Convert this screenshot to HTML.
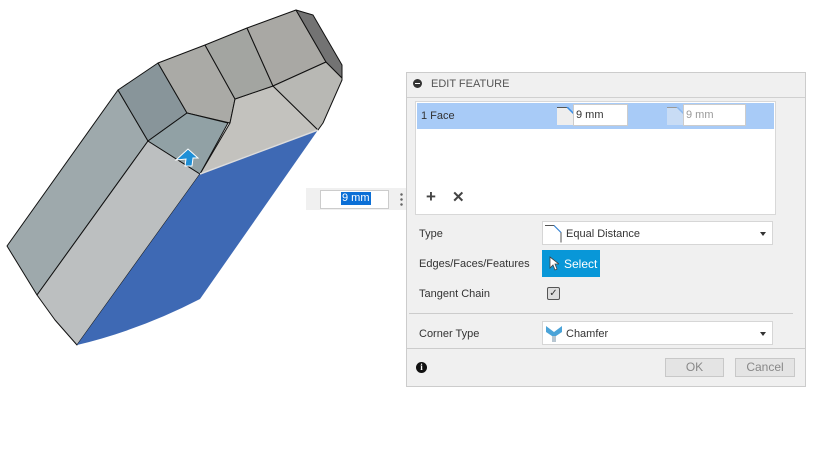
<!DOCTYPE html>
<html><head><style>
body{margin:0;width:827px;height:476px;background:#fff;position:relative;overflow:hidden;font-family:"Liberation Sans",sans-serif;font-size:11px;color:#333}
.a{position:absolute}
.panel{left:406px;top:72px;width:398px;height:313px;background:#f0f0f0;border:1px solid #ccc}
.lbl{position:absolute;left:12px;font-size:11px;color:#333}
.dd{position:absolute;left:135px;width:231px;height:24px;background:#fff;border:1px solid #d6d6d6;box-sizing:border-box}
.dd span{position:absolute;left:23px;top:6px}
.dd i{position:absolute;right:6px;top:10px;border:3px solid transparent;border-top:4px solid #333}
.btn{position:absolute;top:285px;height:19px;border:1px solid #c8c8c8;background:#e4e4e4;box-sizing:border-box;text-align:center;line-height:17px;font-size:12px;color:#888}
</style></head><body>
<svg class="a" style="left:0;top:0" width="360" height="360">
<g stroke="#111" stroke-width="1" stroke-linejoin="round">
<polygon points="118,90 148,141 37,295 7,246" fill="#9ea9ac"/>
<polygon points="148,141 200,174 77,345 55,320 37,295" fill="#bcbfc0"/>
<path d="M200,174 L318,130 L200,299 Q140,330 77,345 Z" fill="#3e69b4" stroke="none"/>
<polygon points="118,90 158,63 187,113 148,141" fill="#88959a"/>
<polygon points="158,63 205,45 235,99 230,123 187,113" fill="#aaaaa6"/>
<polygon points="148,141 187,113 228,123 200,174" fill="#91a1a5"/>
<polygon points="235,99 273,86 318,130 200,174 230,123" fill="#c3c2be"/>
<polygon points="205,45 247,28 273,86 235,99" fill="#a3a5a1"/>
<polygon points="247,28 296,10 326,62 273,86" fill="#a9a8a4"/>
<polygon points="273,86 326,62 342,78 342,80 323,123 318,130" fill="#b8b8b4"/>
<polygon points="296,10 313,15 342,65 342,78 326,62" fill="#737373"/>
</g>
<line x1="200" y1="174" x2="318" y2="130" stroke="#ddd" stroke-width="1.5"/>
<path d="M176,160 L188,149 L198,158 L193,158 L192,166 L185,166 L186,159 Z" fill="#1f8fd6" stroke="#fff" stroke-width="1"/>
</svg>
<div class="a" style="left:306px;top:188px;width:100px;height:22px;background:#f0f0f0"></div>
<div class="a" style="left:320px;top:190px;width:67px;height:17px;background:#fff;border:1px solid #ccc"></div>
<div class="a" style="left:341px;top:192px;background:#0b6fd6;color:#fff;font-size:11px;line-height:13px;padding:0 1px">9 mm</div>
<div class="a" style="left:400px;top:192px;width:3px;height:14px;background:radial-gradient(circle,#666 1px,transparent 1.5px) 0 0/3px 5px"></div>
<div class="a panel">
 <div class="a" style="left:6px;top:6px;width:9px;height:9px;border-radius:50%;background:#333"></div>
 <div class="a" style="left:8px;top:10px;width:5px;height:1px;background:#fff"></div>
 <div class="a" style="left:24px;top:5px;color:#555">EDIT FEATURE</div>
 <div class="a" style="left:0;top:24px;width:398px;height:1px;background:#d0d0d0"></div>
 <div class="a" style="left:8px;top:28px;width:359px;height:112px;background:#fff;border:1px solid #d8d8d8">
  <div class="a" style="left:1px;top:1px;width:357px;height:26px;background:#a8cbf7"></div>
  <div class="a" style="left:5px;top:8px">1 Face</div>
  <svg class="a" style="left:141px;top:5px" width="17" height="18"><path d="M0,0h10l7,7v11H0z" fill="#eee"/><path d="M0,0.5h10M10,0l7,7M16.5,7v11" stroke="#555" fill="none"/><path d="M10,0l7,7" stroke="#3a8ee6" stroke-width="1.5"/></svg>
  <div class="a" style="left:157px;top:2px;width:55px;height:22px;background:#fff;border:1px solid #ccc;box-sizing:border-box;padding:4px 2px">9 mm</div>
  <svg class="a" style="left:251px;top:5px" width="17" height="18"><path d="M0,0h10l7,7v11H0z" fill="#c8dcf5"/><path d="M0,0.5h10M16.5,7v11" stroke="#999" fill="none"/><path d="M10,0l7,7" stroke="#8ab8ef" stroke-width="1.5"/></svg>
  <div class="a" style="left:267px;top:2px;width:63px;height:22px;background:#fff;border:1px solid #ccc;box-sizing:border-box;padding:4px 2px;color:#999">9 mm</div>
  <div class="a" style="left:10px;top:85px;font-size:17px;font-weight:bold;color:#444">+</div>
  <div class="a" style="left:36px;top:86px;font-size:15px;font-weight:bold;color:#444">✕</div>
 </div>
 <div class="lbl" style="top:155px">Type</div>
 <div class="dd" style="top:148px"><svg class="a" style="left:2px;top:3px" width="18" height="18"><path d="M0,0.5h9l7,7v10" stroke="#555" fill="none"/><path d="M9,0.5l7,7" stroke="#3a8ee6"/></svg><span>Equal Distance</span><i></i></div>
 <div class="lbl" style="top:185px">Edges/Faces/Features</div>
 <div class="a" style="left:135px;top:177px;width:58px;height:27px;background:#0897d8;color:#fff;font-size:12px"><svg class="a" style="left:7px;top:6px" width="10" height="15"><path d="M1,1v11l3,-3 2,5 2,-1 -2,-5h4z" fill="#fff" stroke="#444" stroke-width="0.8"/></svg><span class="a" style="left:22px;top:7px">Select</span></div>
 <div class="lbl" style="top:215px">Tangent Chain</div>
 <div class="a" style="left:140px;top:214px;width:11px;height:11px;border:1px solid #555;border-radius:2px;background:#ddd;font-size:10px;line-height:11px;text-align:center">✓</div>
 <div class="a" style="left:2px;top:240px;width:384px;height:1px;background:#ccc"></div>
 <div class="lbl" style="top:255px">Corner Type</div>
 <div class="dd" style="top:248px"><svg class="a" style="left:3px;top:4px" width="16" height="16"><path d="M0,0l8,6 8,-6v6l-6,4v6H6v-6L0,6z" fill="#4aa3d8"/><path d="M6,10h4v6H6z" fill="#b7c6d1"/></svg><span>Chamfer</span><i></i></div>
 <div class="a" style="left:0;top:275px;width:398px;height:1px;background:#ccc"></div>
 <div class="a" style="left:9px;top:289px;width:11px;height:11px;border-radius:50%;background:#111;color:#fff;font-size:9px;font-weight:bold;text-align:center;line-height:11px;font-family:'Liberation Serif',serif">i</div>
 <div class="btn" style="left:258px;width:59px">OK</div>
 <div class="btn" style="left:328px;width:60px">Cancel</div>
</div>
</body></html>
